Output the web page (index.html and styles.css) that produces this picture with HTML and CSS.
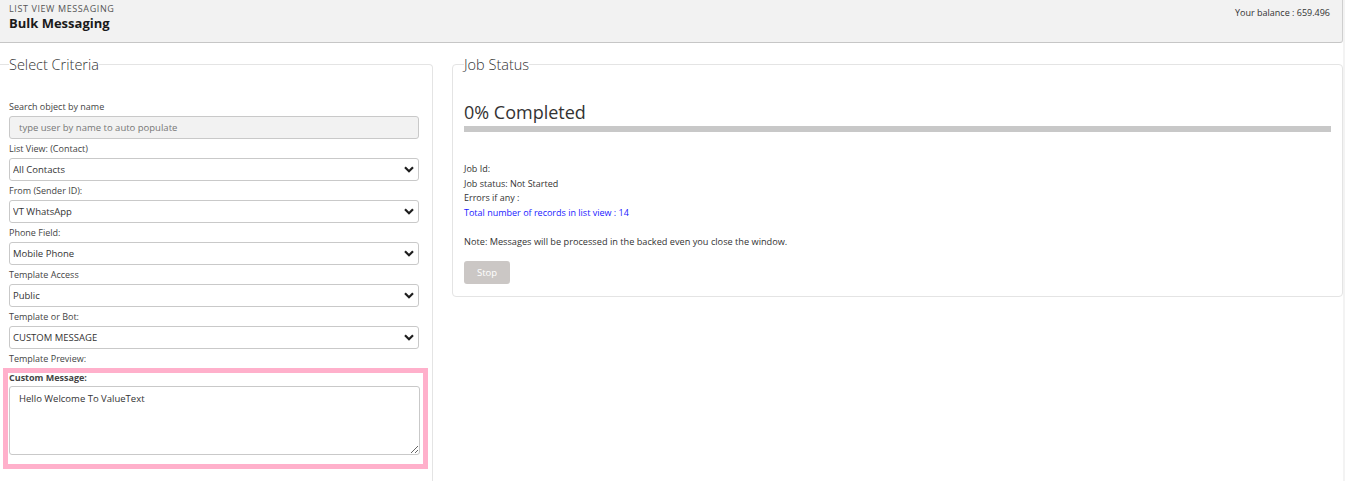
FILE: index.html
```html
<!DOCTYPE html>
<html lang="en">
<head>
    <meta charset="UTF-8">
    <meta name="viewport" content="width=device-width, initial-scale=1.0">
    <title>Bulk Messaging</title>
    <link rel="stylesheet" href="styles.css">
</head>
<body>
    <div class="page">
        <header class="page-header">
            <div class="titles">
                <div class="eyebrow">LIST VIEW MESSAGING</div>
                <div class="title">Bulk Messaging</div>
            </div>
            <div class="balance">Your balance : 659.496</div>
        </header>

        <main class="layout">
            <fieldset class="panel criteria">
                <legend>Select Criteria</legend>

                <label class="field-label">Search object by name</label>
                <input class="text-input" type="text" placeholder="type user by name to auto populate">

                <label class="field-label">List View: (Contact)</label>
                <div class="select-wrap">
                    <select><option>All Contacts</option></select>
                    <svg class="chevron" viewBox="0 0 10 7"><path d="M1 1.2 L5 5.2 L9 1.2"/></svg>
                </div>

                <label class="field-label">From (Sender ID):</label>
                <div class="select-wrap">
                    <select><option>VT WhatsApp</option></select>
                    <svg class="chevron" viewBox="0 0 10 7"><path d="M1 1.2 L5 5.2 L9 1.2"/></svg>
                </div>

                <label class="field-label">Phone Field:</label>
                <div class="select-wrap">
                    <select><option>Mobile Phone</option></select>
                    <svg class="chevron" viewBox="0 0 10 7"><path d="M1 1.2 L5 5.2 L9 1.2"/></svg>
                </div>

                <label class="field-label">Template Access</label>
                <div class="select-wrap">
                    <select><option>Public</option></select>
                    <svg class="chevron" viewBox="0 0 10 7"><path d="M1 1.2 L5 5.2 L9 1.2"/></svg>
                </div>

                <label class="field-label">Template or Bot:</label>
                <div class="select-wrap">
                    <select><option>CUSTOM MESSAGE</option></select>
                    <svg class="chevron" viewBox="0 0 10 7"><path d="M1 1.2 L5 5.2 L9 1.2"/></svg>
                </div>

                <label class="field-label">Template Preview:</label>

                <div class="custom-box">
                    <label class="field-label strong">Custom Message:</label>
                    <textarea class="message-input">Hello Welcome To ValueText</textarea>
                </div>
            </fieldset>

            <fieldset class="panel status">
                <legend>Job Status</legend>

                <h2 class="progress-title">0% Completed</h2>
                <div class="progress-bar"><div class="progress-fill" style="width: 0%"></div></div>

                <div class="job-info">
                    <div>Job Id:</div>
                    <div>Job status: Not Started</div>
                    <div>Errors if any :</div>
                    <div class="records">Total number of records in list view : 14</div>
                </div>

                <p class="note">Note: Messages will be processed in the backed even you close the window.</p>

                <button class="stop-btn" disabled>Stop</button>
            </fieldset>
        </main>
    </div>
</body>
</html>
```

FILE: styles.css
```css
html, body {
    height: 100%;
}

body {
    margin: 0;
    padding: 0;
    background-color: #f3f3f3;
    font-family: "Open Sans", "Noto Sans", Arial, sans-serif;
    color: #333;
    overflow: hidden;
}

.page {
    margin-right: 2px;
    min-height: 100%;
    background-color: #fff;
}

.page-header {
    display: flex;
    justify-content: space-between;
    align-items: flex-start;
    height: 43px;
    box-sizing: border-box;
    padding: 3px 12px 0 9px;
    background-color: #f2f2f2;
    border-bottom: 1px solid #c6c6c6;
    border-right: 1px solid #cfcfcf;
    border-bottom-right-radius: 3px;
}

.eyebrow {
    font-size: 9px;
    letter-spacing: 0.6px;
    color: #555;
    line-height: 12px;
}

.title {
    font-size: 13px;
    font-weight: 700;
    color: #1a1a1a;
    line-height: 17px;
}

.balance {
    font-size: 9px;
    color: #333;
    margin-top: 3px;
}

.layout {
    display: grid;
    grid-template-columns: 433px 1fr;
    column-gap: 19px;
    align-items: start;
    padding-top: 12px;
}

.panel {
    margin: 0;
    min-width: 0;
    border: 1px solid #e4e4e4;
    border-radius: 4px;
}

.panel legend {
    padding: 0;
    font-size: 14.5px;
    font-weight: 300;
    color: #333;
    line-height: 19px;
}

.criteria {
    border-left: none;
    border-top-left-radius: 0;
    border-bottom-left-radius: 0;
    padding: 23px 13px 40px 9px;
}

.field-label {
    display: block;
    font-size: 9px;
    line-height: 19px;
    color: #444;
}

.field-label.strong {
    font-weight: 700;
    line-height: 13px;
    margin-top: -2px;
    margin-bottom: 2px;
}

.text-input,
.select-wrap select,
.message-input {
    display: block;
    width: 100%;
    box-sizing: border-box;
    border: 1px solid #c9c9c9;
    border-radius: 3px;
    font-family: inherit;
    font-size: 9.5px;
    color: #333;
    outline: none;
}

.text-input {
    height: 23px;
    padding: 0 9px;
    background-color: #f2f2f2;
}

.text-input::placeholder {
    color: #777;
}

.select-wrap {
    position: relative;
}

.select-wrap select {
    height: 23px;
    padding: 0 20px 0 3px;
    background-color: #fff;
    appearance: none;
    -webkit-appearance: none;
}

.chevron {
    position: absolute;
    right: 5px;
    top: 8px;
    width: 10px;
    height: 7px;
    fill: none;
    stroke: #1e1e1e;
    stroke-width: 2.2;
    pointer-events: none;
}

.custom-box {
    margin: 0 -9px 0 -6px;
    padding: 0 3px 9px 1px;
    border: 5px solid #ffb0cb;
}

.message-input {
    height: 69px;
    padding: 5px 9px;
    resize: vertical;
    background-color: #fff;
}

.status {
    padding: 12px 11px 12px 11px;
}

.progress-title {
    margin: 14px 0 2px;
    font-size: 18px;
    font-weight: 400;
    line-height: 24px;
    color: #333;
}

.progress-bar {
    height: 6px;
    background-color: #c8c8c8;
}

.progress-fill {
    height: 100%;
    background-color: #4a90e2;
}

.job-info {
    margin-top: 30px;
    font-size: 9px;
    line-height: 14.5px;
    color: #333;
}

.records {
    color: #1a1aff;
}

.note {
    margin: 14px 0 12px;
    font-size: 9.2px;
    line-height: 15px;
    color: #333;
}

.stop-btn {
    display: block;
    width: 46px;
    height: 23px;
    border: none;
    border-radius: 3px;
    background-color: #cbc7c5;
    color: #fff;
    font-family: inherit;
    font-size: 9.5px;
    padding: 0;
}
```
